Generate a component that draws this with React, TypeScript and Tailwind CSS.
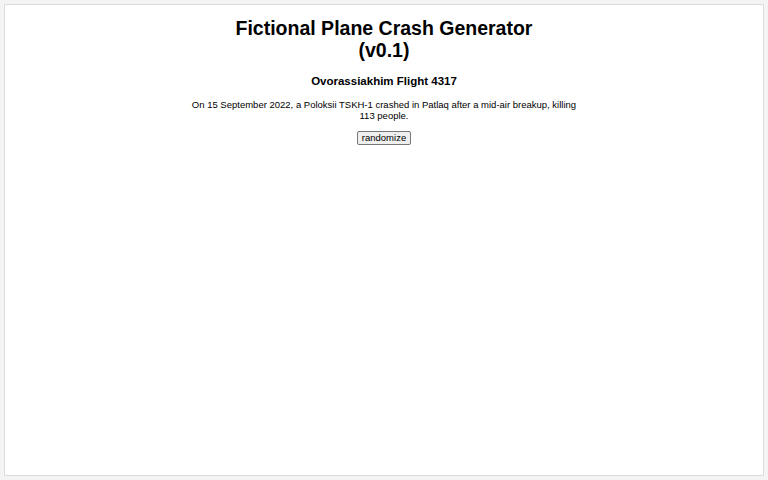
import React, { useState } from "react";

type Crash = {
  airline: string;
  flight: number;
  date: string;
  aircraft: string;
  place: string;
  cause: string;
  deaths: number;
};

const first: Crash = {
  airline: "Ovorassiakhim",
  flight: 4317,
  date: "15 September 2022",
  aircraft: "Poloksii TSKH-1",
  place: "Patlaq",
  cause: "a mid-air breakup",
  deaths: 113,
};

const airlines = ["Ovorassiakhim", "Kestrava Air", "Tolmund Airways", "Zerekhi"];
const aircraft = ["Poloksii TSKH-1", "Varnel V-40", "Aeroskol 212"];
const places = ["Patlaq", "Ostrimo", "Veldhaven", "Kurzamyr"];
const causes = ["a mid-air breakup", "an engine fire", "pilot error", "a runway overrun"];
const months = ["January", "February", "March", "April", "May", "June", "July", "August", "September", "October", "November", "December"];

const pick = <T,>(list: T[]) => list[Math.floor(Math.random() * list.length)];

export default function App() {
  const [crash, setCrash] = useState<Crash>(first);

  const randomize = () => {
    setCrash({
      airline: pick(airlines),
      flight: 100 + Math.floor(Math.random() * 9900),
      date: `${1 + Math.floor(Math.random() * 28)} ${pick(months)} ${1970 + Math.floor(Math.random() * 55)}`,
      aircraft: pick(aircraft),
      place: pick(places),
      cause: pick(causes),
      deaths: Math.floor(Math.random() * 400),
    });
  };

  return (
    <div className="min-h-screen bg-[#f4f4f4] p-1 font-['Liberation_Sans',Arial,sans-serif] text-black">
      <div className="h-[472px] border border-[#dcdcdc] bg-white">
        <div className="mx-auto w-[400px] text-center">
          <h1 className="mt-[12px] text-[19.5px] leading-[22px] font-bold">
            Fictional Plane Crash Generator
            <br />
            (v0.1)
          </h1>
          <h2 className="mt-[13px] text-[11.5px] leading-[14px] font-bold">
            {crash.airline} Flight {crash.flight}
          </h2>
          <p className="mt-[11px] text-[9.5px] leading-[11px]">
            On {crash.date}, a {crash.aircraft} crashed in {crash.place} after {crash.cause}, killing {crash.deaths} people.
          </p>
          <button
            onClick={randomize}
            className="mt-[10px] h-[14px] rounded-[2px] border border-[#767676] bg-[#efefef] px-1 text-[9.5px] leading-[12px]"
          >
            randomize
          </button>
        </div>
      </div>
    </div>
  );
}
